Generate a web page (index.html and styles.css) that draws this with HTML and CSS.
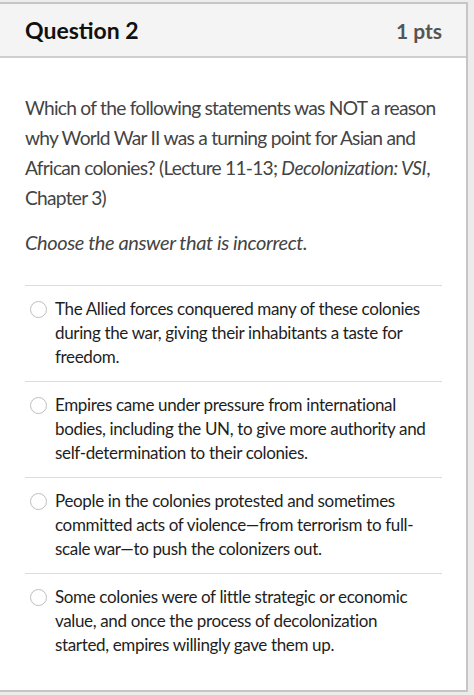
FILE: index.html
```html
<!DOCTYPE html>
<html lang="en">
<head>
<meta charset="utf-8">
<title>Question 2</title>
<link rel="stylesheet" href="styles.css">
</head>
<body>
<div class="quiz">
  <div class="quiz-header">
    <h2 class="quiz-title">Question 2</h2>
    <span class="quiz-points">1 pts</span>
  </div>
  <div class="quiz-body">
    <p class="question-text">Which of the following statements was NOT a reason why World War II was a turning point for Asian and African colonies? (Lecture 11-13; <em>Decolonization: VSI</em>, Chapter 3)</p>
    <p class="question-note"><em>Choose the answer that is incorrect.</em></p>
    <div class="answers">
      <label class="answer"><span class="radio"></span><span class="answer-text">The Allied forces conquered many of these colonies during the war, giving their inhabitants a taste for freedom.</span></label>
      <label class="answer"><span class="radio"></span><span class="answer-text">Empires came under pressure from international bodies, including the UN, to give more authority and self-determination to their colonies.</span></label>
      <label class="answer"><span class="radio"></span><span class="answer-text">People in the colonies protested and sometimes committed acts of violence—from terrorism to full-scale war—to push the colonizers out.</span></label>
      <label class="answer"><span class="radio"></span><span class="answer-text">Some colonies were of little strategic or economic value, and once the process of decolonization started, empires willingly gave them up.</span></label>
    </div>
  </div>
</div>
</body>
</html>
```

FILE: styles.css
```css
* { box-sizing: border-box; }
html, body { margin: 0; padding: 0; background: #ececec; }
body { font-family: Lato, "Liberation Sans", sans-serif; padding-top: 2px; }

.quiz {
  width: 470px;
  margin-left: -2px;
  border: 2px solid #c6c6c6;
  background: #fff;
  height: 690px;
}
.quiz-header {
  display: flex;
  justify-content: space-between;
  align-items: center;
  height: 54px;
  padding: 0 24px 0 25px;
  background: #f4f4f4;
  border-bottom: 2px solid #cfcfcf;
}
.quiz-title {
  margin: 0;
  font-size: 23px;
  font-weight: 700;
  color: #111;
}
.quiz-points {
  font-size: 21px;
  font-weight: 700;
  color: #555;
}
.quiz-body {
  padding: 35px 24px 0 25px;
}
.question-text {
  margin: 0 -6px 0 0;
  font-size: 19.2px;
  line-height: 30px;
  font-weight: 400;
  letter-spacing: -0.75px;
  color: #444;
}
.question-text em { font-style: italic; letter-spacing: -0.5px; }
.question-note {
  margin: 14px 0 0;
  font-size: 20px;
  line-height: 30px;
  font-weight: 400;
  letter-spacing: -0.4px;
  color: #444;
}
.answers { margin-top: 28px; }
.answer {
  display: flex;
  gap: 8px;
  padding: 11px 9px 12px 5px;
  border-top: 1px solid #dcdcdc;
  font-size: 17px;
  line-height: 24px;
  letter-spacing: -0.35px;
  color: #1e1e1e;
}
.radio {
  flex: none;
  width: 17px;
  height: 17px;
  margin-top: 4px;
  border: 1px solid #bdbdbd;
  border-radius: 50%;
  background: #fff;
}
.answer-text { flex: 1; }
```
